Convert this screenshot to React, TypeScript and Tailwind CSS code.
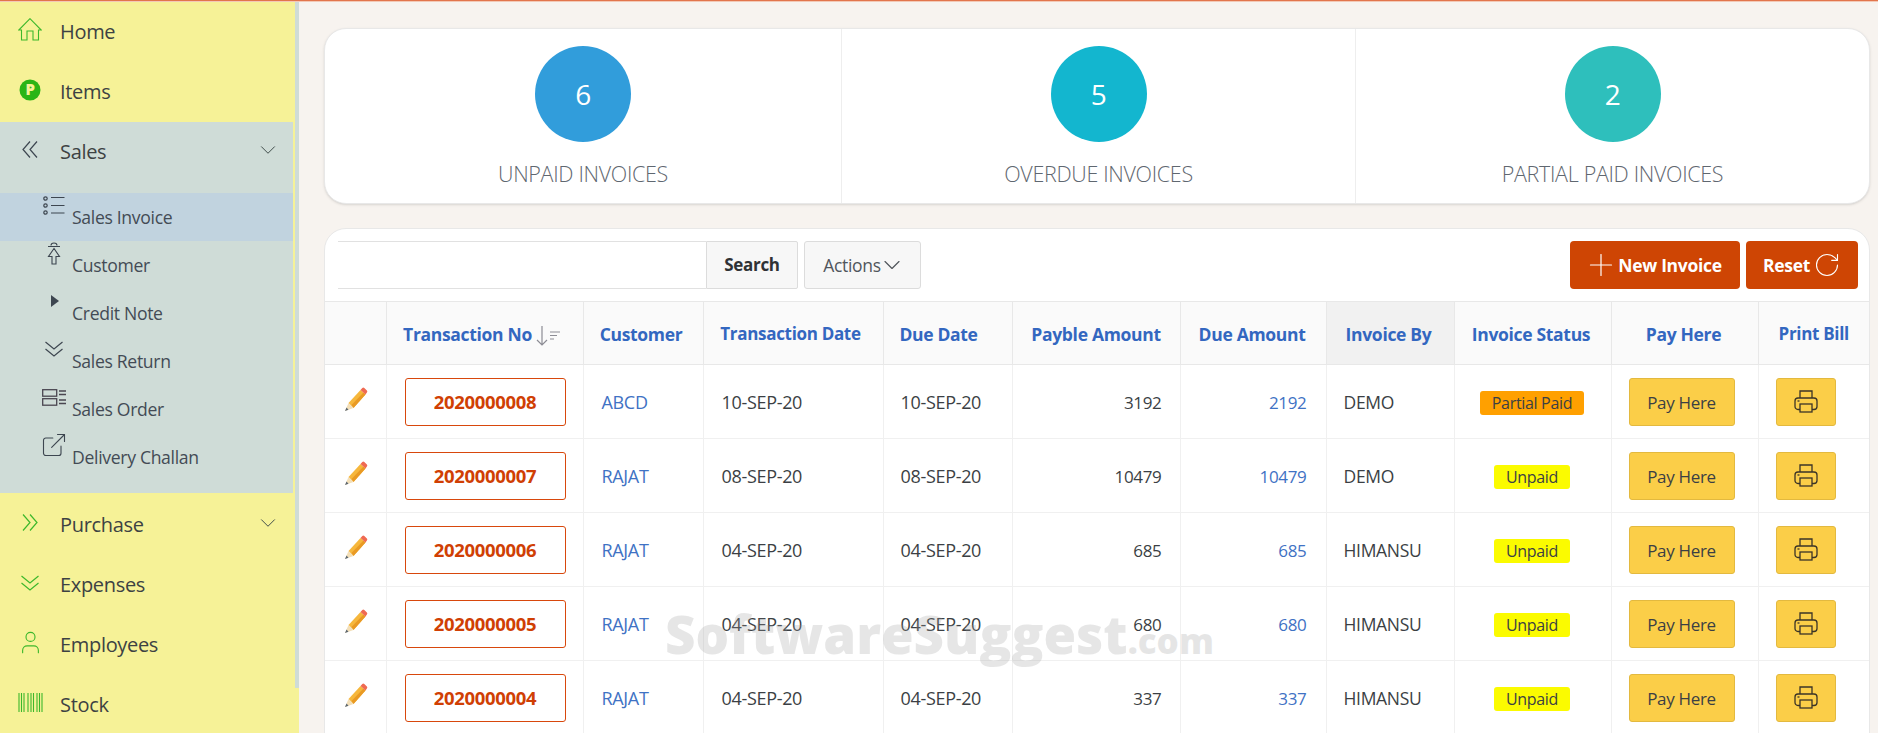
import React from 'react';
import { ChevronDown, ExternalLink, User, Plus, RotateCw } from 'lucide-react';

const invoices = [
  { no: '2020000008', customer: 'ABCD', date: '10-SEP-20', due: '10-SEP-20', payable: '3192', dueAmount: '2192', by: 'DEMO', status: 'Partial Paid' },
  { no: '2020000007', customer: 'RAJAT', date: '08-SEP-20', due: '08-SEP-20', payable: '10479', dueAmount: '10479', by: 'DEMO', status: 'Unpaid' },
  { no: '2020000006', customer: 'RAJAT', date: '04-SEP-20', due: '04-SEP-20', payable: '685', dueAmount: '685', by: 'HIMANSU', status: 'Unpaid' },
  { no: '2020000005', customer: 'RAJAT', date: '04-SEP-20', due: '04-SEP-20', payable: '680', dueAmount: '680', by: 'HIMANSU', status: 'Unpaid' },
  { no: '2020000004', customer: 'RAJAT', date: '04-SEP-20', due: '04-SEP-20', payable: '337', dueAmount: '337', by: 'HIMANSU', status: 'Unpaid' },
];

const stats = [
  { count: 6, label: 'UNPAID INVOICES', color: 'bg-[#319ddb]' },
  { count: 5, label: 'OVERDUE INVOICES', color: 'bg-[#13b6cf]' },
  { count: 2, label: 'PARTIAL PAID INVOICES', color: 'bg-[#2ebfbc]' },
];

const GREEN = '#3db82c';
const DARK = '#3d4650';

const HomeIcon = () => (
  <svg width="24" height="23" viewBox="0 0 24 23" fill="none" stroke={GREEN} strokeWidth="1.100">
    <path d="M12 .7.8 12h2.700v10H9v-9h6v9h5.500V12h2.700z" />
  </svg>
);

const ItemsIcon = () => (
  <svg width="22" height="22" viewBox="0 0 22 22">
    <circle cx="11" cy="11" r="10.5" fill="#2bb516" />
    <text x="11" y="16" textAnchor="middle" fontSize="15" fontWeight="800" fill="#f6f297" fontFamily="Open Sans, sans-serif">P</text>
  </svg>
);

const BarcodeIcon = () => (
  <svg width="25" height="20" viewBox="0 0 25 20" stroke={GREEN} strokeWidth="1.100">
    <path d="M1 0v19M3.500 0v19M6 0v19M10 0v19M13 0v19M15.500 0v19M19 0v19M21.500 0v19M24 0v19" />
  </svg>
);

const DoubleLeft = ({ color }: { color: string }) => (
  <svg width="16" height="17" viewBox="0 0 16 17" fill="none" stroke={color} strokeWidth="1.200">
    <path d="M8 .5 1 8.500l7 8M15 .5l-7 8 7 8" />
  </svg>
);

const DoubleRight = ({ color }: { color: string }) => (
  <svg width="16" height="17" viewBox="0 0 16 17" fill="none" stroke={color} strokeWidth="1.200">
    <path d="M1 .5l7 8-7 8M8 .5l7 8-7 8" />
  </svg>
);

const DoubleDown = ({ color }: { color: string }) => (
  <svg width="18" height="16" viewBox="0 0 18 16" fill="none" stroke={color} strokeWidth="1.200">
    <path d="M.5 1 9 8l8.500-7M.5 8 9 15l8.500-7" />
  </svg>
);

const ListIcon = () => (
  <svg width="22" height="19" viewBox="0 0 22 19" fill="none" stroke={DARK} strokeWidth="1.200">
    <circle cx="2.500" cy="2.500" r="1.700" />
    <circle cx="2.500" cy="9.500" r="1.700" />
    <circle cx="2.500" cy="16.500" r="1.700" />
    <path d="M8 1.500h13.500M8 9.500h13.500M8 17h13.500" />
  </svg>
);

const CustomerIcon = () => (
  <svg width="14" height="23" viewBox="0 0 14 23" fill="none" stroke={DARK} strokeWidth="1.100">
    <path d="M4 3.500a3 2.500 0 0 1 6 0M1 4.500h12" />
    <path d="M7 6.500 1.500 14.500H5V22h4v-7.500h3.500z" />
  </svg>
);

const CaretIcon = () => (
  <svg width="8" height="12" viewBox="0 0 8 12" className="ml-[2px]">
    <path d="M0 0 8 6 0 12z" fill={DARK} />
  </svg>
);

const OrderIcon = () => (
  <svg width="24" height="17" viewBox="0 0 24 17" fill="none" stroke="#4a4650" strokeWidth="1.300">
    <rect x=".7" y=".7" width="14" height="6.500" />
    <rect x=".7" y="9.700" width="14" height="6.500" />
    <path d="M17 2h7M17 5.500h7M17 11h7M17 14.500h7" />
  </svg>
);

const PencilIcon = () => (
  <svg width="25" height="25" viewBox="0 0 24 25" className="-mt-[4px]">
    <path d="M5 16 17 3l5 4.500L10 21z" fill="#f6b73c" />
    <path d="M8 18 20 5.500l2 2L10 21z" fill="#e99a24" />
    <path d="M17 3l1.800-2a1.500 1.500 0 0 1 2 0l2.600 2.400a1.500 1.500 0 0 1 0 2L22 7.500z" fill="#ef6a52" />
    <path d="M5 16 1.500 24 10 21z" fill="#f3dfb8" />
    <path d="M3 20.500 1.500 24l3.500-1.300z" fill="#5b6670" />
  </svg>
);

const PrinterIcon = () => (
  <svg width="24" height="23" viewBox="0 0 24 23" fill="#fbce48" stroke="#3b3427" strokeWidth="1.300">
    <path d="M6 8V1h12v7" />
    <rect x="1" y="8" width="22" height="11.500" rx="3" />
    <rect x="6" y="14" width="12" height="8" />
    <path d="M3.500 11h2" />
  </svg>
);

const SortIcon = () => (
  <svg width="24" height="20" viewBox="0 0 24 20" fill="none" stroke="#8c8c94" strokeWidth="1.200" className="ml-[4px] inline-block align-middle">
    <path d="M6 0v19M1 14l5 5 5-5" />
    <path d="M14 6h10M14 9.500h7M14 13h4" />
  </svg>
);

const NavRow = ({ icon, label, caret }: { icon: React.ReactNode; label: string; caret?: boolean }) => (
  <div className="flex h-[60px] items-center text-[20px] text-[#3d4243]">
    <div className="flex w-[60px] shrink-0 justify-center pb-[5px]">{icon}</div>
    <span className="flex-1 pb-[1px]">{label}</span>
    {caret && <ChevronDown size={26} strokeWidth={0.9} className="mb-[5px] mr-[12px] text-[#3d4a48]" />}
  </div>
);

const SubRow = ({ icon, label, active }: { icon: React.ReactNode; label: string; active?: boolean }) => (
  <div className={`flex h-[48px] items-start ${active ? 'bg-[#c1d3df]' : ''}`}>
    <div className="ml-[36px] flex h-[24px] w-[36px] shrink-0 items-center justify-center">{icon}</div>
    <span className="pt-[11px] text-[17.6px] leading-[26px] text-[#434b55]">{label}</span>
  </div>
);

const Sidebar = () => (
  <aside className="flex w-[299px] shrink-0 bg-[#f6f297]">
    <nav className="w-[293px] shrink-0">
      <NavRow icon={<HomeIcon />} label="Home" />
      <NavRow icon={<ItemsIcon />} label="Items" />
      <div className="h-[371px] bg-[#cfdcd7]">
        <div className="h-[71px]">
          <NavRow icon={<DoubleLeft color={DARK} />} label="Sales" caret />
        </div>
        <SubRow icon={<ListIcon />} label="Sales Invoice" active />
        <SubRow icon={<CustomerIcon />} label="Customer" />
        <SubRow icon={<CaretIcon />} label="Credit Note" />
        <SubRow icon={<DoubleDown color={DARK} />} label="Sales Return" />
        <SubRow icon={<OrderIcon />} label="Sales Order" />
        <SubRow icon={<ExternalLink size={28} strokeWidth={0.95} color={DARK} />} label="Delivery Challan" />
      </div>
      <div className="pt-[2px]">
        <NavRow icon={<DoubleRight color={GREEN} />} label="Purchase" caret />
        <NavRow icon={<DoubleDown color={GREEN} />} label="Expenses" />
        <NavRow icon={<User size={27} strokeWidth={1} color={GREEN} />} label="Employees" />
        <NavRow icon={<BarcodeIcon />} label="Stock" />
      </div>
    </nav>
    <div className="ml-[2px] h-[686px] w-[4px] bg-[#cfdcd7]" />
  </aside>
);

const StatCards = () => (
  <section className="grid h-[176px] grid-cols-[516px_514px_1fr] rounded-[22px] border border-[#e8e8e8] bg-white shadow-sm">
    {stats.map((stat, i) => (
      <div key={stat.label} className={`flex flex-col items-center pt-[17px] ${i > 0 ? 'border-l border-[#eeeeee]' : ''}`}>
        <div className={`flex h-[96px] w-[96px] items-center justify-center rounded-full text-[28px] text-white ${stat.color}`}>
          {stat.count}
        </div>
        <div className="mt-[18px] text-[21.5px] font-light leading-[28px] text-[#5f6770]">{stat.label}</div>
      </div>
    ))}
  </section>
);

const Toolbar = () => (
  <div className="flex h-[72px] items-center pl-[13px] pr-[11px]">
    <div className="h-[48px] w-[368px] border-y border-[#e1e1e1]" />
    <button className="h-[48px] w-[92px] rounded-r-[2px] border border-[#dcdcdc] bg-[#f7f7f7] text-[17px] font-bold text-[#2f3235]">Search</button>
    <button className="ml-[6px] flex h-[48px] w-[117px] items-center justify-center rounded-[3px] border border-[#dcdcdc] bg-[#f7f7f7] text-[17.5px] text-[#51565c]">
      Actions <ChevronDown size={28} strokeWidth={1} className="-ml-[3px] -mr-[4px]" />
    </button>
    <button className="ml-auto flex h-[48px] w-[170px] items-center justify-center rounded-[4px] bg-[#ce4504] text-[17.5px] font-bold text-white">
      <Plus size={36} strokeWidth={0.8} className="-ml-[5px] -mr-[1px]" /> New Invoice
    </button>
    <button className="ml-[6px] flex h-[48px] w-[112px] items-center justify-center gap-[3px] rounded-[4px] bg-[#ce4504] text-[17.5px] font-bold text-white">
      Reset <RotateCw size={28} strokeWidth={0.95} />
    </button>
  </div>
);

const InvoiceTable = () => (
  <table className="w-full table-fixed border-collapse">
    <colgroup>
      <col className="w-[61px]" />
      <col className="w-[197px]" />
      <col className="w-[120px]" />
      <col className="w-[180px]" />
      <col className="w-[129px]" />
      <col className="w-[168px]" />
      <col className="w-[146px]" />
      <col className="w-[128px]" />
      <col className="w-[157px]" />
      <col className="w-[147px]" />
      <col className="w-[111px]" />
    </colgroup>
    <thead>
      <tr className="h-[63px] border-y border-[#e8e8e8] bg-[#fafafa] text-[17.5px] text-[#3367c0] [&>th]:pt-[2px]">
        <th className="border-r border-[#e8e8e8]" />
        <th className="whitespace-nowrap border-r border-[#e8e8e8] pr-[6px] font-bold">Transaction No<SortIcon /></th>
        <th className="whitespace-nowrap border-r border-[#e8e8e8] pr-[4px] font-bold">Customer</th>
        <th className="whitespace-nowrap border-r border-[#e8e8e8] pr-[5px] text-[17px] font-bold">Transaction Date</th>
        <th className="whitespace-nowrap border-r border-[#e8e8e8] pr-[18px] font-bold">Due Date</th>
        <th className="whitespace-nowrap border-r border-[#e8e8e8] font-bold">Payble Amount</th>
        <th className="whitespace-nowrap border-r border-[#e8e8e8] pr-[2px] font-bold">Due Amount</th>
        <th className="whitespace-nowrap border-r border-[#e8e8e8] bg-[#f1f1f1] pr-[3px] font-bold">Invoice By</th>
        <th className="whitespace-nowrap border-r border-[#e8e8e8] pr-[3px] font-bold">Invoice Status</th>
        <th className="whitespace-nowrap border-r border-[#e8e8e8] pr-[2px] font-bold">Pay Here</th>
        <th className="whitespace-nowrap text-[17px] font-bold">Print Bill</th>
      </tr>
    </thead>
    <tbody className="text-[#3b3f44]">
      {invoices.map((row) => (
        <tr key={row.no} className="h-[74px] border-b border-[#f0f0f0] text-[17px]">
          <td className="border-r border-[#f0f0f0] pl-[18px]"><PencilIcon /></td>
          <td className="border-r border-[#f0f0f0] px-[18px]">
            <div className="flex h-[48px] w-[161px] items-center justify-center rounded-[3px] border border-[#d8480c] text-[18.5px] font-bold text-[#d03f04]">{row.no}</div>
          </td>
          <td className="border-r border-[#f0f0f0] pl-[18px] pt-[2px] text-[18px] text-[#3f72c4]">{row.customer}</td>
          <td className="border-r border-[#f0f0f0] pl-[18px] pt-[2px] text-[18px]">{row.date}</td>
          <td className="border-r border-[#f0f0f0] pl-[17px] pt-[2px] text-[18px]">{row.due}</td>
          <td className="border-r border-[#f0f0f0] pr-[18px] pt-[2px] text-right">{row.payable}</td>
          <td className="border-r border-[#f0f0f0] pr-[19px] pt-[2px] text-right text-[#3f72c4]">{row.dueAmount}</td>
          <td className="border-r border-[#f0f0f0] pl-[17px] pt-[2px] text-[17.5px]">{row.by}</td>
          <td className="border-r border-[#f0f0f0] pr-[1px] pt-[2px] text-center">
            <span className={`inline-block h-[24px] rounded-[3px] px-[12px] text-[16px] leading-[24px] ${row.status === 'Unpaid' ? 'bg-[#fbfb00]' : 'bg-[#ffa000]'}`}>{row.status}</span>
          </td>
          <td className="border-r border-[#f0f0f0] pl-[17px]">
            <div className="flex h-[48px] w-[106px] items-center justify-center rounded-[3px] border border-[#e3b93f] bg-[#fbce48] pt-[2px]">Pay Here</div>
          </td>
          <td className="pl-[17px]">
            <div className="flex h-[48px] w-[60px] items-center justify-center rounded-[3px] border border-[#e3b93f] bg-[#fbce48]">
              <PrinterIcon />
            </div>
          </td>
        </tr>
      ))}
    </tbody>
  </table>
);

export default function App() {
  return (
    <div className="relative h-[733px] w-[1878px] overflow-hidden bg-[#f7f3ef] font-['Open_Sans',sans-serif] tracking-[-0.02em]">
      <div className="h-[2px] border-t border-[#e2754c] bg-[#f3c9b6]" />
      <div className="flex">
        <Sidebar />
        <main className="ml-[25px] mr-[8px] flex-1 pt-[26px]">
          <StatCards />
          <section className="mt-[24px] rounded-t-[22px] border border-[#e8e8e8] bg-white">
            <Toolbar />
            <InvoiceTable />
          </section>
        </main>
      </div>
      {/* site watermark */}
      <div className="pointer-events-none absolute left-[665px] top-[599px] whitespace-nowrap text-[52.8px] font-extrabold leading-[70px] tracking-normal text-[#9a9a9a]/25">
        SoftwareSuggest<span className="text-[35px]">.com</span>
      </div>
    </div>
  );
}
